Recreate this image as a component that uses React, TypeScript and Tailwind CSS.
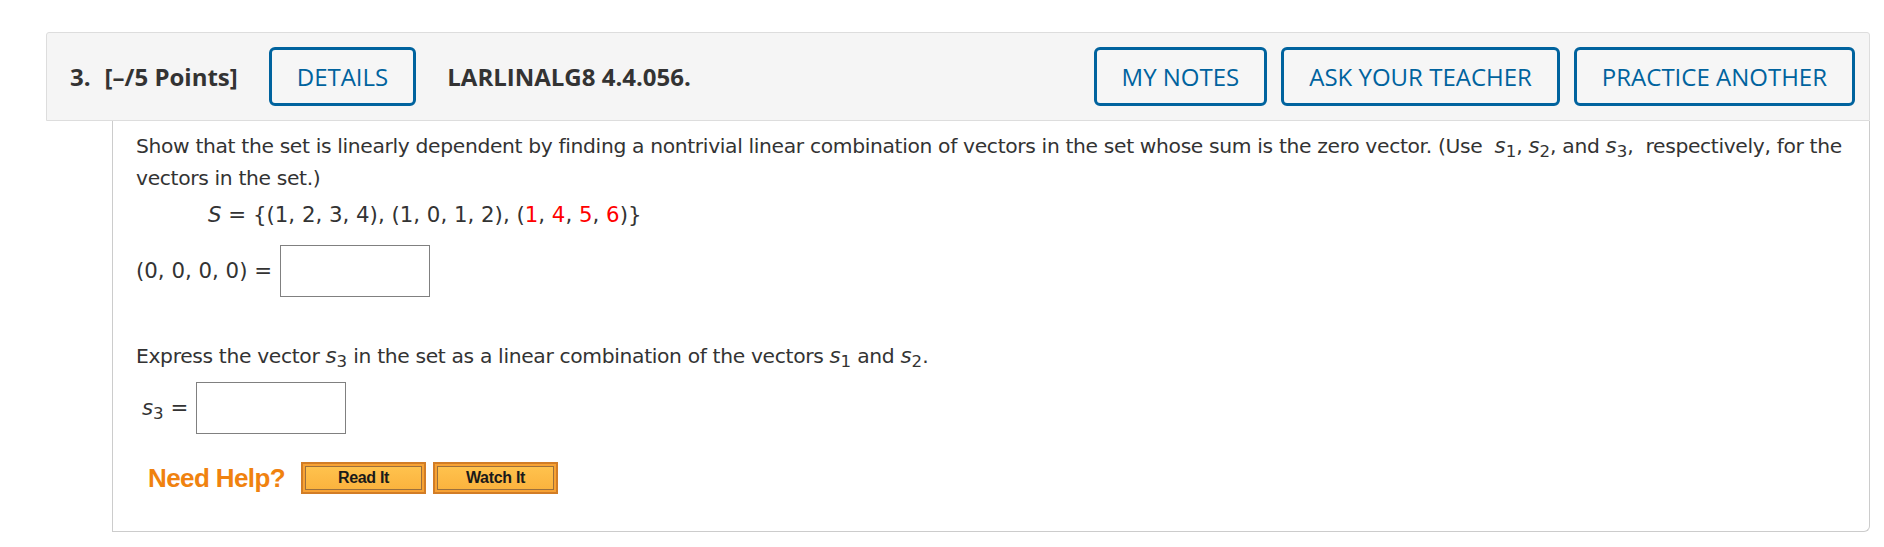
import React from "react";

// WebAssign-style question card: grey header strip with blue outlined actions,
// then the question body with two answer boxes and the "Need Help?" buttons.

const HEADER_BUTTONS = ["MY NOTES", "ASK YOUR TEACHER", "PRACTICE ANOTHER"];

function OutlineButton({ label }: { label: string }) {
  return (
    <button
      type="button"
      className="flex h-[59px] items-center rounded-[6px] border-[3px] border-[#00639e] bg-[#f6f6f6] px-[25px] text-[24px] text-[#00639e]"
    >
      {label}
    </button>
  );
}

function S({ n }: { n?: number }) {
  return (
    <span className="whitespace-nowrap text-[21.3px] tracking-normal">
      <i>s</i>
      {n ? <sub className="text-[0.78em] not-italic">{n}</sub> : null}
    </span>
  );
}

function AnswerBox() {
  return <div className="h-[52px] w-[150px] border border-[#808080] bg-white" />;
}

function HelpButton({ label }: { label: string }) {
  return (
    <button
      type="button"
      className="h-[32px] w-[125px] border-2 border-[#d27d26] bg-[#f7a234] p-[2px]"
    >
      <div className="flex h-full items-center justify-center border border-[#9c6f3c] bg-gradient-to-b from-[#ffc24d] to-[#fbb33e] font-['Liberation_Sans',Arial,sans-serif] text-[16px] font-bold tracking-[-0.3px] text-[#1a1a1a]">
        {label}
      </div>
    </button>
  );
}

export default function App() {
  return (
    <div className="min-h-[547px] bg-white pt-[32px] pl-[46px] pr-[14px] font-['Open_Sans',sans-serif]">
      {/* header strip */}
      <div className="flex h-[89px] items-center rounded-t-[3px] border border-[#dddddd] bg-[#f5f5f5] pl-[23px] pr-[14px] text-[#333333]">
        <span className="text-[24px] font-bold">3.</span>
        <span className="ml-[14px] text-[24px] font-bold">[–/5 Points]</span>
        <div className="ml-[31px]">
          <OutlineButton label="DETAILS" />
        </div>
        <span className="ml-[31px] text-[24px] font-bold">LARLINALG8 4.4.056.</span>
        <div className="ml-auto flex gap-[14px]">
          {HEADER_BUTTONS.map((b) => (
            <OutlineButton key={b} label={b} />
          ))}
        </div>
      </div>

      {/* question body */}
      <div className="ml-[66px] h-[411px] rounded-br-[6px] border-x border-b border-[#cccccc] pt-[9px] pl-[23px] pr-[20px] font-['DejaVu_Sans',Verdana,sans-serif] text-[21.3px] leading-[32px] text-[#333333]">
        <p className="text-[20.3px] tracking-[-0.35px]">
          Show that the set is linearly dependent by finding a nontrivial linear combination of vectors in the set whose sum is the zero vector. (Use&nbsp; <S n={1} />, <S n={2} />, and <S n={3} />,&nbsp; respectively, for the vectors in the set.)
        </p>
        <p className="mt-[5px] pl-[72px]">
          <i>S</i> = {"{"}(1, 2, 3, 4), (1, 0, 1, 2), (<span className="text-[#ff0000]">1</span>, <span className="text-[#ff0000]">4</span>, <span className="text-[#ff0000]">5</span>, <span className="text-[#ff0000]">6</span>){"}"}
        </p>

        <div className="mt-[14px] flex items-center gap-[8px]">
          <span>(0, 0, 0, 0) =</span>
          <AnswerBox />
        </div>

        <p className="mt-[43px] text-[20.3px] tracking-[-0.35px]">
          Express the vector <S n={3} /> in the set as a linear combination of the vectors <S n={1} /> and <S n={2} />.
        </p>

        <div className="mt-[10px] flex items-center gap-[8px] pl-[6px]">
          <span>
            <S n={3} /> =
          </span>
          <AnswerBox />
        </div>

        <div className="mt-[28px] flex items-center pl-[12px]">
          <span className="font-['Liberation_Sans',Arial,sans-serif] text-[26px] font-bold tracking-[-0.6px] text-[#f0820f]">
            Need Help?
          </span>
          <div className="ml-[16px] flex gap-[7px]">
            <HelpButton label="Read It" />
            <HelpButton label="Watch It" />
          </div>
        </div>
      </div>
    </div>
  );
}
